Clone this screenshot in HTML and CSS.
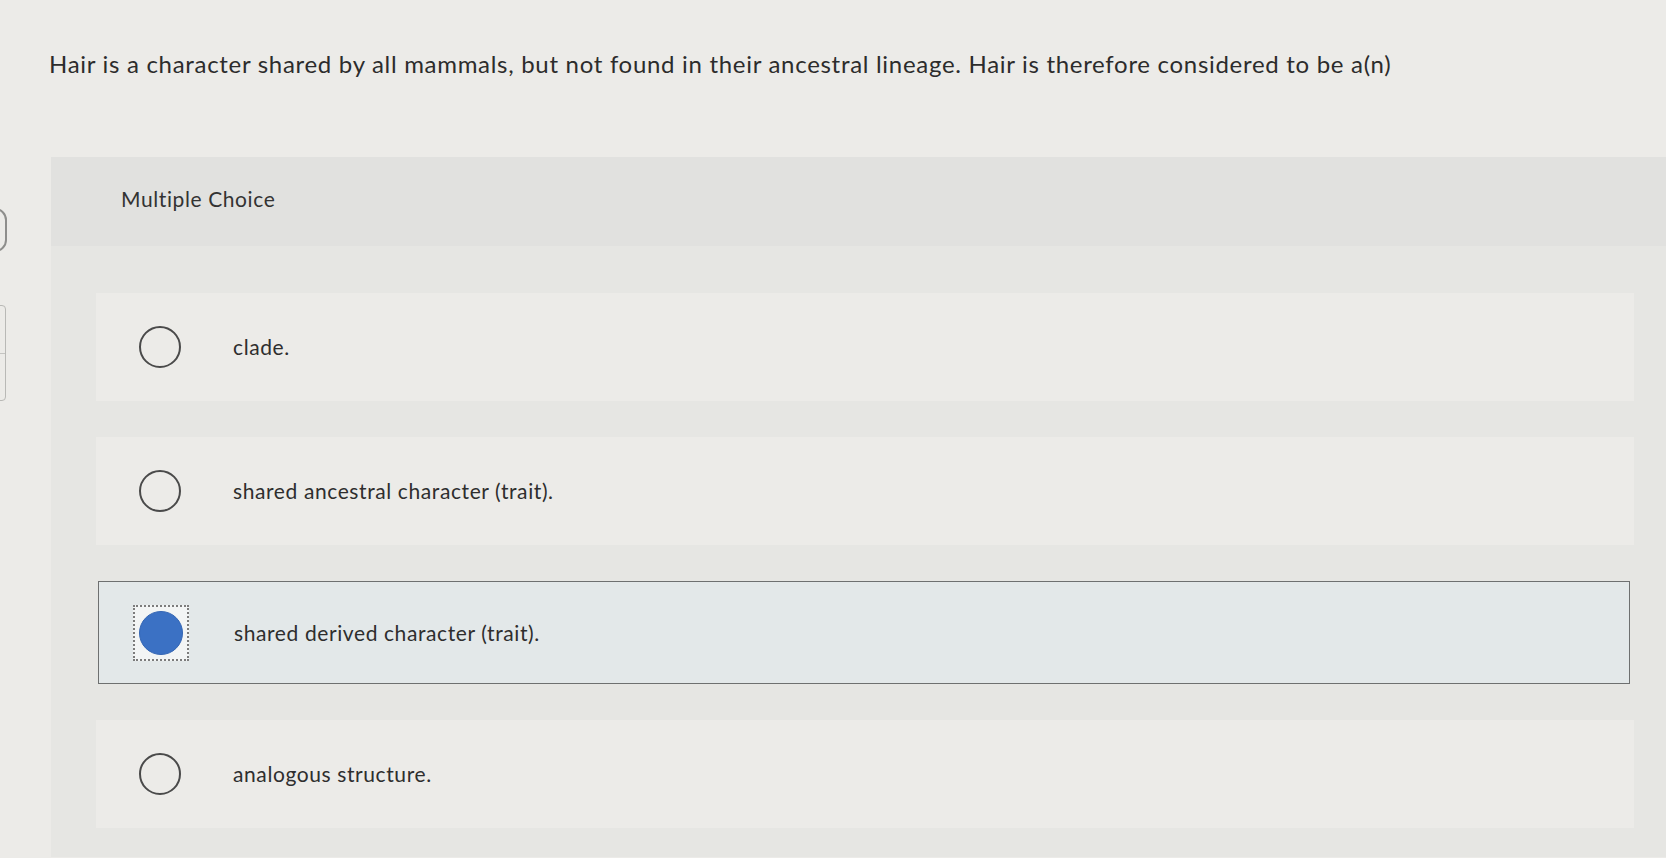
FILE: index.html
```html
<!DOCTYPE html>
<html lang="en">
<head>
<meta charset="utf-8">
<title>Multiple Choice</title>
<link rel="stylesheet" href="styles.css">
</head>
<body>
<div class="layout">
  <aside class="rail">
    <span class="rail-button"></span>
    <span class="rail-box"><span class="rail-cell"></span><span class="rail-cell"></span></span>
  </aside>
  <main class="page">
    <p class="question">Hair is a character shared by all mammals, but not found in their ancestral lineage. Hair is therefore considered to be a(n)</p>
    <section class="panel">
      <div class="panel-header">Multiple Choice</div>
      <div class="options">
        <label class="option">
          <span class="radio"></span>
          <span class="option-text">clade.</span>
        </label>
        <label class="option">
          <span class="radio"></span>
          <span class="option-text">shared ancestral character (trait).</span>
        </label>
        <label class="option selected">
          <span class="focus-ring"><span class="radio checked"></span></span>
          <span class="option-text">shared derived character (trait).</span>
        </label>
        <label class="option">
          <span class="radio"></span>
          <span class="option-text">analogous structure.</span>
        </label>
      </div>
    </section>
  </main>
</div>
</body>
</html>
```
FILE: styles.css
```css
* { box-sizing: border-box; }
html, body { margin: 0; height: 100%; }
body {
  background: #ecebe8;
  font-family: Lato, "Open Sans", "Liberation Sans", sans-serif;
  color: #2f2f2f;
  overflow: hidden;
}
.layout {
  display: flex;
}
.rail {
  width: 8px;
  flex: none;
  display: flex;
  flex-direction: column;
  overflow: hidden;
}
.rail-button {
  display: block;
  width: 24px;
  height: 44px;
  margin: 208px 0 0 -17px;
  border: 2px solid #8e8e8c;
  border-radius: 14px;
}
.rail-box {
  display: flex;
  flex-direction: column;
  width: 24px;
  height: 96px;
  margin: 53px 0 0 -18px;
  border: 1px solid #b9b9b6;
  border-radius: 4px;
}
.rail-cell {
  flex: 1;
}
.rail-cell + .rail-cell {
  border-top: 1px solid #c4c4c1;
}
.page {
  flex: 1;
  min-width: 0;
  padding: 50px 0 0 41px;
}
.question {
  margin: 0;
  font-size: 24px;
  line-height: 28px;
  letter-spacing: 0.7px;
  color: #2c2c2c;
}
.panel {
  margin: 79px 0 0 2px;
  background: #e6e6e3;
  min-height: 700px;
}
.panel-header {
  height: 89px;
  padding: 30px 0 0 70px;
  font-size: 21px;
  letter-spacing: 0.6px;
  line-height: 24px;
  background: #e1e1df;
  color: #333;
}
.options {
  display: flex;
  flex-direction: column;
  gap: 36px;
  padding: 47px 32px 0 45px;
}
.option {
  height: 108px;
  display: flex;
  align-items: center;
  padding-left: 43px;
  background: #ecebe8;
  font-size: 21px;
  letter-spacing: 0.6px;
  color: #2e2e2e;
}
.option.selected {
  background: #e3e8e9;
  border: 1.5px solid #6e7070;
  padding-left: 41px;
  margin: 0 4px 0 2px;
  height: 103px;
}
.radio {
  width: 42px;
  height: 42px;
  border-radius: 50%;
  border: 2px solid #4a4a4a;
  flex: none;
  margin-right: 52px;
  display: block;
}
.focus-ring {
  flex: none;
  display: flex;
  align-items: center;
  justify-content: center;
  width: 56px;
  height: 56px;
  margin: 0 45px 0 -7px;
  border: 2.5px dotted #7c7c7c;
  background: #f3f5f5;
}
.radio.checked {
  width: 44px;
  height: 44px;
  margin: 0;
  background: #3b71c4;
  border: 1px solid #3466b4;
}
.option-text {
  line-height: 24px;
}
```
